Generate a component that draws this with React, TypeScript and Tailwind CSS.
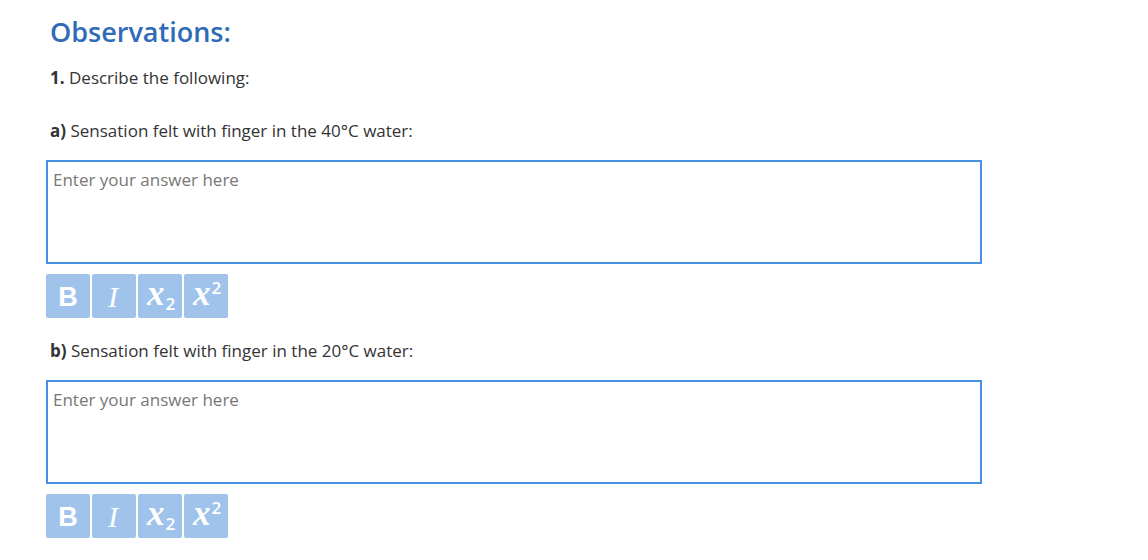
import React from "react";

const btn =
  "w-[44px] h-[44px] rounded-[2px] bg-[#9fc3eb] text-white flex justify-center leading-none";

const Toolbar = () => (
  <div className="flex gap-[2px] mt-[10px]">
    <button className={`${btn} items-center pt-[2px] text-[27px] font-bold font-['Liberation_Sans',sans-serif]`}>
      B
    </button>
    <button className={`${btn} items-center pt-[2px] pr-[2px] text-[30px] italic font-['Liberation_Serif',serif]`}>
      I
    </button>
    <button className={`${btn} items-center gap-[1px] pl-[2px] font-['Liberation_Serif',serif]`}>
      <span className="text-[35px] font-bold italic pb-[6px]">x</span>
      <span className="self-end pb-[6px] text-[17px] font-semibold font-['Open_Sans',sans-serif]">2</span>
    </button>
    <button className={`${btn} items-center gap-[1px] pl-[2px] font-['Liberation_Serif',serif]`}>
      <span className="text-[35px] font-bold italic pb-[6px]">x</span>
      <span className="self-start pt-[5px] text-[17px] font-semibold font-['Open_Sans',sans-serif]">2</span>
    </button>
  </div>
);

const Question = ({ letter, text }: { letter: string; text: string }) => (
  <div>
    <p className="text-[17px] leading-[24px] text-[#333] pl-[4px]">
      <span className="font-bold">{letter})</span> {text}
    </p>
    <textarea
      placeholder="Enter your answer here"
      className="block mt-[17px] w-[936px] h-[104px] border-2 border-[#4a90e2] px-[5px] pt-[6px] pb-[8px] text-[17px] leading-[24px] text-[#333] placeholder:text-[#777] resize-none outline-none"
    />
    <Toolbar />
  </div>
);

export default function App() {
  return (
    <div className="w-[1148px] h-[560px] bg-white font-['Open_Sans',sans-serif] pl-[46px] pt-[14px]">
      <h1 className="text-[27px] font-semibold text-[#2f6bb7] pl-[4px] leading-[36px]">Observations:</h1>
      <p className="text-[17px] leading-[24px] text-[#333] pl-[4px] mt-[16px]">
        <span className="font-bold">1.</span> Describe the following:
      </p>
      <div className="mt-[29px] flex flex-col gap-[21px]">
        <Question letter="a" text="Sensation felt with finger in the 40°C water:" />
        <Question letter="b" text="Sensation felt with finger in the 20°C water:" />
      </div>
    </div>
  );
}
